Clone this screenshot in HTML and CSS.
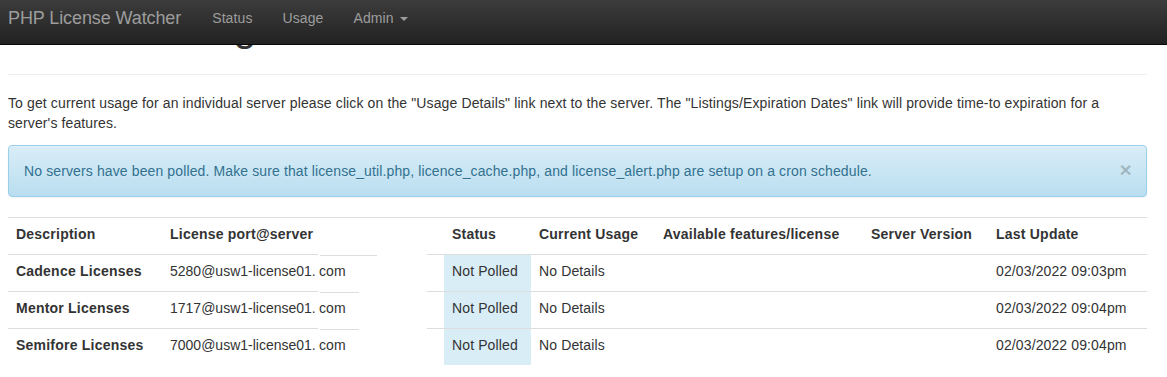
FILE: index.html
```html
<!DOCTYPE html>
<html lang="en">
<head>
<meta charset="utf-8">
<title>PHP License Watcher</title>
<link rel="stylesheet" href="styles.css">
</head>
<body>
<nav class="navbar">
  <a class="brand" href="#">PHP License Watcher</a>
  <ul class="nav">
    <li><a href="#">Status</a></li>
    <li><a href="#">Usage</a></li>
    <li><a href="#">Admin <span class="caret"></span></a></li>
  </ul>
</nav>
<main class="container">
  <div class="page-header">
    <h1>License Usage</h1>
  </div>
  <p class="intro">To get current usage for an individual server please click on the "Usage Details" link next to the server. The "Listings/Expiration Dates" link will provide time-to expiration for a server's features.</p>
  <div class="alert">
    <span class="close">&times;</span>
    No servers have been polled. Make sure that license_util.php, licence_cache.php, and license_alert.php are setup on a cron schedule.
  </div>
  <table class="table">
    <colgroup>
      <col class="c-desc"><col class="c-lic"><col class="c-com"><col class="c-gap"><col class="c-pre"><col class="c-status"><col class="c-usage"><col class="c-avail"><col class="c-ver"><col class="c-last">
    </colgroup>
    <thead>
      <tr>
        <th>Description</th>
        <th colspan="4">License port@server</th>
        <th>Status</th>
        <th>Current Usage</th>
        <th>Available features/license</th>
        <th>Server Version</th>
        <th>Last Update</th>
      </tr>
    </thead>
    <tbody>
      <tr>
        <th>Cadence Licenses</th>
        <td class="lic">5280@usw1-license01.</td>
        <td class="com seg-long">com</td>
        <td class="gap"></td>
        <td></td>
        <td class="info">Not Polled</td>
        <td>No Details</td>
        <td></td>
        <td></td>
        <td>02/03/2022 09:03pm</td>
      </tr>
      <tr>
        <th>Mentor Licenses</th>
        <td class="lic">1717@usw1-license01.</td>
        <td class="com seg-short">com</td>
        <td class="gap"></td>
        <td></td>
        <td class="info">Not Polled</td>
        <td>No Details</td>
        <td></td>
        <td></td>
        <td>02/03/2022 09:04pm</td>
      </tr>
      <tr>
        <th>Semifore Licenses</th>
        <td class="lic">7000@usw1-license01.</td>
        <td class="com seg-short">com</td>
        <td class="gap"></td>
        <td></td>
        <td class="info">Not Polled</td>
        <td>No Details</td>
        <td></td>
        <td></td>
        <td>02/03/2022 09:04pm</td>
      </tr>
    </tbody>
  </table>
</main>
</body>
</html>
```
FILE: styles.css
```css
* { box-sizing: border-box; }

html, body {
  margin: 0;
  padding: 0;
  background: #fff;
}

body {
  font-family: "Liberation Sans", Arial, Helvetica, sans-serif;
  font-size: 14px;
  line-height: 20px;
  color: #333;
  width: 1167px;
  overflow: hidden;
  letter-spacing: 0.12px;
}

.navbar {
  position: fixed;
  top: 0;
  left: 0;
  right: 0;
  height: 45px;
  z-index: 10;
  display: flex;
  align-items: center;
  background: linear-gradient(to bottom, #3c3c3c 0%, #222 100%);
  border-bottom: 1px solid #080808;
  padding-left: 8px;
  letter-spacing: 0;
}

.brand {
  font-size: 18px;
  line-height: 20px;
  color: #9d9d9d;
  text-decoration: none;
  padding-right: 16px;
  margin-top: -9px;
  letter-spacing: -0.1px;
}

.nav {
  list-style: none;
  margin: 0;
  padding: 0;
  display: flex;
  margin-top: -9px;
}

.nav a {
  display: block;
  padding: 0 15px;
  color: #9d9d9d;
  text-decoration: none;
  font-size: 14px;
  line-height: 20px;
  letter-spacing: 0.1px;
}

.caret {
  display: inline-block;
  width: 0;
  height: 0;
  margin-left: 2px;
  vertical-align: middle;
  border-top: 4px solid;
  border-left: 4px solid transparent;
  border-right: 4px solid transparent;
}

.container {
  width: 1139px;
  margin-left: 8px;
}

.page-header {
  padding-top: 5px;
  padding-bottom: 24px;
  border-bottom: 1px solid #eee;
  margin-bottom: 18px;
}

.page-header h1 {
  margin: 0;
  font-size: 41px;
  font-weight: 500;
  line-height: 45px;
  color: #333;
  letter-spacing: 0;
}

.intro {
  margin: 0 0 12px;
}

.alert {
  padding: 15px 35px 15px 15px;
  border: 1px solid #9acfea;
  border-radius: 4px;
  background: linear-gradient(to bottom, #d9edf7 0%, #b9def0 100%);
  color: #31708f;
  margin-bottom: 20px;
  box-shadow: inset 0 1px 0 rgba(255,255,255,.25), 0 1px 2px rgba(0,0,0,.05);
  text-shadow: 0 1px 0 rgba(255,255,255,.2);
}

.close {
  float: right;
  position: relative;
  top: -2px;
  right: -21px;
  font-size: 21px;
  font-weight: bold;
  line-height: 1;
  color: #000;
  opacity: .2;
  text-shadow: 0 1px 0 #fff;
}

.table {
  width: 1139px;
  border-collapse: collapse;
  table-layout: fixed;
}

.c-desc { width: 154px; }
.c-lic { width: 156px; }
.c-com { width: 59px; }
.c-gap { width: 50px; }
.c-pre { width: 17px; }
.c-status { width: 87px; }
.c-usage { width: 124px; }
.c-avail { width: 208px; }
.c-ver { width: 125px; }
.c-last { width: 159px; }

.table th,
.table td {
  padding: 6px 8px 10px;
  line-height: 20px;
  text-align: left;
  vertical-align: top;
  border-top: 1px solid #ddd;
  white-space: nowrap;
  overflow: hidden;
}

.table th {
  font-weight: bold;
  letter-spacing: 0.22px;
}

.table td.lic {
  letter-spacing: 0;
  padding-right: 0;
}

.table tbody td.com {
  padding-left: 1px;
  padding-right: 0;
  border-top: none;
  background-repeat: no-repeat;
  background-image: linear-gradient(#ddd, #ddd);
  background-position: 2px 0;
}

.table tbody td.seg-long { background-size: 57px 1px; }
.table tbody td.seg-short { background-size: 39px 1px; }

.table tbody td.gap {
  border-top: none;
}

.table td.info {
  background-color: #d9edf7;
}
```
